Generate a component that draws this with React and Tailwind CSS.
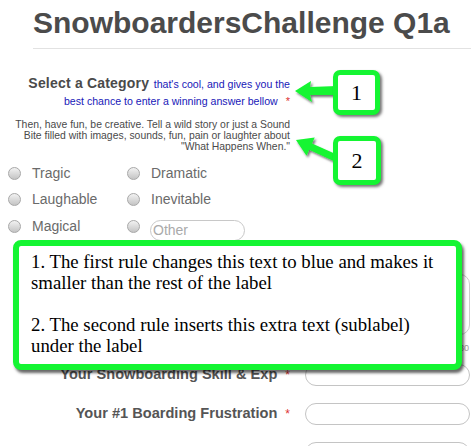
const options = [
  ["Tragic", "Dramatic"],
  ["Laughable", "Inevitable"],
  ["Magical", null],
];

function Radio() {
  return (
    <span className="block w-[13px] h-[13px] rounded-full border border-[#a8a8a8] bg-gradient-to-b from-[#f2f2f2] to-[#c4c4c4]" />
  );
}

function Choice({ label }) {
  return (
    <div className="flex items-center h-[26.5px]">
      <Radio />
      {label ? (
        <span className="ml-[11px] text-[14px] text-[#6a6a6a]">{label}</span>
      ) : (
        <div className="ml-[10px] mt-[8px] w-[95px] h-[21px] rounded-full border border-[#c8c8c8] pl-[2px] text-[14px] leading-[19px] text-[#aaa]">
          Other
        </div>
      )}
    </div>
  );
}

function FieldRow({ label }) {
  return (
    <div className="flex items-center h-[22px]">
      <div className="w-[290px] text-right text-[14.6px] font-bold text-[#555]">
        {label}
        {label && <span className="ml-[8px] text-[12px] font-normal text-[#d33]">*</span>}
      </div>
      <div className="ml-[15px] w-[165px] h-[22px] rounded-full border border-[#c4c4c4]" />
    </div>
  );
}

export default function App() {
  return (
    <div className="relative w-[471px] h-[446px] overflow-hidden bg-white font-['Liberation_Sans',Arial,sans-serif]">
      <h1 className="ml-[33px] pt-[6px] text-[30px] leading-[34px] font-bold text-[#4b4b4b] whitespace-nowrap">
        SnowboardersChallenge Q1a
      </h1>
      <div className="ml-[33px] mt-[8px] border-t border-[#e2e2e2]" />

      <div className="mt-[26px] w-[290px] text-right leading-[15px]">
        <span className="text-[14px] font-bold text-[#4a4a4a] tracking-[0.2px]">Select a Category</span>{" "}
        <span className="text-[10.6px] text-[#1818b8]">that's cool, and gives you the</span>
        <br />
        <span className="text-[10.6px] text-[#1818b8]">best chance to enter a winning answer bellow</span>
        <span className="ml-[8px] text-[11px] text-[#d33]">*</span>
      </div>

      <div className="mt-[10px] w-[290px] text-right text-[10.4px] leading-[11px] text-[#4a4a4a]">
        Then, have fun, be creative. Tell a wild story or just a Sound
        <br />
        Bite filled with images, sounds, fun, pain or laughter about
        <br />
        "What Happens When."
      </div>

      <div className="mt-[8px] ml-[8px] grid grid-cols-[119px_1fr]">
        {options.map(([a, b], i) => (
          <div key={i} className="contents">
            <Choice label={a} />
            <Choice label={b} />
          </div>
        ))}
      </div>

      <div className="mt-[34px] ml-[305px] w-[165px] h-[61px] rounded-[10px] border border-[#ccc]" />
      <div className="h-[29px] pr-[2px] text-right text-[9px] leading-[26px] text-[#999]">30</div>

      <div className="flex flex-col gap-[17px]">
        <FieldRow label="Your Snowboarding Skill & Exp" />
        <FieldRow label="Your #1 Boarding Frustration" />
        <FieldRow label="" />
      </div>

      <svg className="absolute left-0 top-0 pointer-events-none" width="471" height="446" viewBox="0 0 471 446">
        <defs>
          <filter id="sh" x="-20%" y="-20%" width="140%" height="140%">
            <feDropShadow dx="1.5" dy="2" stdDeviation="1.2" floodColor="#000" floodOpacity="0.55" />
          </filter>
        </defs>
        <polygon
          points="295,91 311,81 310,87 338,86 338,95 310,95 312,102"
          fill="#14f532"
          filter="url(#sh)"
        />
        <polygon
          points="296,140 314.7,137.5 312,143.4 340,156 337,162.5 309.2,149.8 306.5,155.7"
          fill="#14f532"
          filter="url(#sh)"
        />
      </svg>

      <div className="absolute left-[333px] top-[70px] w-[47px] h-[45px] rounded-[7px] border-[5px] border-[#14f532] bg-white shadow-[2px_2px_3px_rgba(0,0,0,0.55)] flex items-center justify-center font-['Liberation_Serif','Times_New_Roman',serif] text-[22px] text-black">
        1
      </div>
      <div className="absolute left-[333px] top-[136px] w-[48px] h-[49px] rounded-[7px] border-[5px] border-[#14f532] bg-white shadow-[2px_2px_3px_rgba(0,0,0,0.55)] flex items-center justify-center font-['Liberation_Serif','Times_New_Roman',serif] text-[22px] text-black">
        2
      </div>

      <div className="absolute left-[13px] top-[240px] w-[449px] h-[130px] rounded-[8px] border-[6px] border-[#14f532] bg-white shadow-[2px_3px_3px_rgba(0,0,0,0.6)] pl-[12px] pr-[10px] pt-[5px] font-['Liberation_Serif','Times_New_Roman',serif] text-[18.8px] leading-[21px] text-black">
        <p>1. The first rule changes this text to blue and makes it smaller than the rest of the label</p>
        <p className="mt-[21px]">2. The second rule inserts this extra text (sublabel) under the label</p>
      </div>
    </div>
  );
}
